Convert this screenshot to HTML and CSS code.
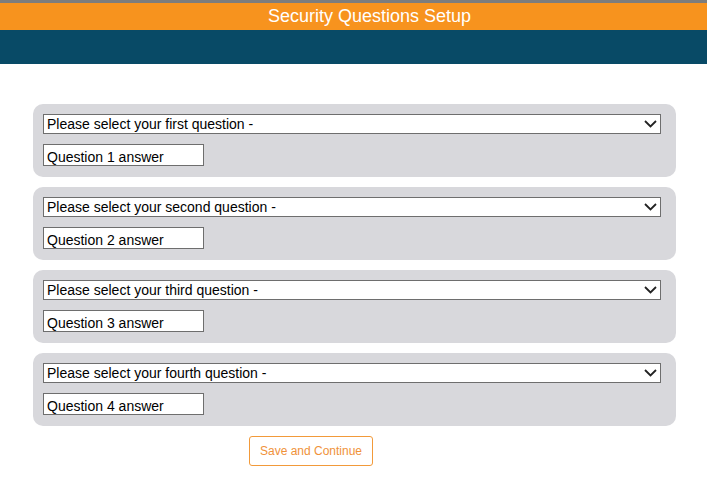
FILE: index.html
```html
<!DOCTYPE html>
<html>
<head>
<meta charset="utf-8">
<link rel="stylesheet" href="styles.css">
</head>
<body>
<header class="header">
  <div class="title-bar">Security Questions Setup</div>
  <div class="sub-bar"></div>
</header>
<main class="content">
  <div class="panel">
    <div class="select-wrap">
      <select class="q-select"><option>Please select your first question -</option></select>
      <svg class="chev" width="13" height="8" viewBox="0 0 13 8"><path d="M1 1 L6.5 6.5 L12 1" fill="none" stroke="#222" stroke-width="1.8"/></svg>
    </div>
    <input class="q-answer" type="text" value="Question 1 answer">
  </div>
  <div class="panel">
    <div class="select-wrap">
      <select class="q-select"><option>Please select your second question -</option></select>
      <svg class="chev" width="13" height="8" viewBox="0 0 13 8"><path d="M1 1 L6.5 6.5 L12 1" fill="none" stroke="#222" stroke-width="1.8"/></svg>
    </div>
    <input class="q-answer" type="text" value="Question 2 answer">
  </div>
  <div class="panel">
    <div class="select-wrap">
      <select class="q-select"><option>Please select your third question -</option></select>
      <svg class="chev" width="13" height="8" viewBox="0 0 13 8"><path d="M1 1 L6.5 6.5 L12 1" fill="none" stroke="#222" stroke-width="1.8"/></svg>
    </div>
    <input class="q-answer" type="text" value="Question 3 answer">
  </div>
  <div class="panel">
    <div class="select-wrap">
      <select class="q-select"><option>Please select your fourth question -</option></select>
      <svg class="chev" width="13" height="8" viewBox="0 0 13 8"><path d="M1 1 L6.5 6.5 L12 1" fill="none" stroke="#222" stroke-width="1.8"/></svg>
    </div>
    <input class="q-answer" type="text" value="Question 4 answer">
  </div>
  <div class="actions">
    <button class="save-btn" type="button">Save and Continue</button>
  </div>
</main>
</body>
</html>
```

FILE: styles.css
```css
* { box-sizing: border-box; }
html, body { margin: 0; padding: 0; background: #ffffff; }
body { font-family: "Liberation Sans", Arial, sans-serif; }

.header { border-top: 3px solid #7d7d7d; }
.title-bar {
  height: 27px;
  background: #f7931e;
  color: #ffffff;
  font-size: 18px;
  line-height: 27px;
  text-align: center;
  padding-left: 32px;
}
.sub-bar { height: 34px; background: #084a66; }

.content {
  margin: 40px 31px 0 33px;
  display: flex;
  flex-direction: column;
  gap: 10px;
}
.panel {
  background: #d8d8dc;
  border-radius: 10px;
  height: 73px;
  padding: 10px 15px 0 10px;
  display: flex;
  flex-direction: column;
  align-items: flex-start;
  gap: 10px;
}
.select-wrap { position: relative; width: 100%; height: 20px; }
.q-select {
  appearance: none;
  -webkit-appearance: none;
  width: 100%;
  height: 20px;
  margin: 0;
  padding: 0 0 0 3px;
  border: 1px solid #6e6e6e;
  border-radius: 0;
  background: #ffffff;
  color: #000;
  font-family: "Liberation Sans", Arial, sans-serif;
  font-size: 14px;
  line-height: 18px;
}
.chev { position: absolute; right: 4px; top: 6px; }
.q-answer {
  width: 161px;
  height: 22px;
  margin: 0;
  padding: 3px 2px 0 3px;
  border: 1px solid #6e6e6e;
  border-radius: 0;
  background: #fff;
  color: #000;
  font-family: "Liberation Sans", Arial, sans-serif;
  font-size: 14px;
}
.actions { padding-left: 216px; }
.save-btn {
  width: 124px;
  height: 30px;
  background: #ffffff;
  border: 1px solid #f29a3a;
  border-radius: 3px;
  color: #f0923a;
  font-family: "Liberation Sans", Arial, sans-serif;
  font-size: 12px;
  padding: 0;
}
```
